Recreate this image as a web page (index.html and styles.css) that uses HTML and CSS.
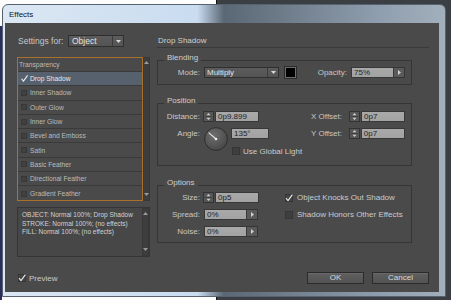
FILE: index.html
```html
<!DOCTYPE html>
<html>
<head>
<meta charset="utf-8">
<title>Effects</title>
<link rel="stylesheet" href="styles.css">
</head>
<body>
<div class="window">
  <div class="titlebar">Effects</div>
  <div class="client">
    <div class="main">
      <div class="left">
        <div class="settings">
          <span class="settings-lbl">Settings for:</span>
          <div class="select select-object"><span class="select-text">Object</span><span class="select-btn"><svg width="5" height="3" viewBox="0 0 5 3"><path d="M0 0H5L2.5 3Z" fill="#d8d8d8"/></svg></span></div>
        </div>
        <div class="listwrap">
          <ul class="list">
            <li class="list-head">Transparency</li>
            <li class="list-item is-selected"><span class="lchk"><svg width="7" height="7" viewBox="0 0 7 7"><path d="M0.6 3.8L2.5 6L6.6 0.4" fill="none" stroke="#f0f0f0" stroke-width="1.1"/></svg></span>Drop Shadow</li>
            <li class="list-item"><span class="lbox"></span>Inner Shadow</li>
            <li class="list-item"><span class="lbox"></span>Outer Glow</li>
            <li class="list-item"><span class="lbox"></span>Inner Glow</li>
            <li class="list-item"><span class="lbox"></span>Bevel and Emboss</li>
            <li class="list-item"><span class="lbox"></span>Satin</li>
            <li class="list-item"><span class="lbox"></span>Basic Feather</li>
            <li class="list-item"><span class="lbox"></span>Directional Feather</li>
            <li class="list-item"><span class="lbox"></span>Gradient Feather</li>
          </ul>
          <div class="scroll">
            <svg width="5" height="3" viewBox="0 0 5 3"><path d="M0 3H5L2.5 0Z" fill="#9a9a9a"/></svg>
            <svg width="5" height="3" viewBox="0 0 5 3"><path d="M0 0H5L2.5 3Z" fill="#9a9a9a"/></svg>
          </div>
        </div>
        <div class="summary">
          <div class="sumtext">OBJECT: Normal 100%; Drop Shadow<br>STROKE: Normal 100%; (no effects)<br>FILL: Normal 100%; (no effects)</div>
          <div class="scroll">
            <svg width="5" height="3" viewBox="0 0 5 3"><path d="M0 3H5L2.5 0Z" fill="#9a9a9a"/></svg>
            <svg width="5" height="3" viewBox="0 0 5 3"><path d="M0 0H5L2.5 3Z" fill="#9a9a9a"/></svg>
          </div>
        </div>
      </div>

      <div class="right">
        <div class="header">Drop Shadow</div>

        <div class="group group-blending">
          <div class="gtitle">Blending</div>
          <div class="blend-row">
            <span class="flabel">Mode:</span>
            <div class="select select-mode"><span class="select-text">Multiply</span><span class="select-btn"><svg width="5" height="3" viewBox="0 0 5 3"><path d="M0 0H5L2.5 3Z" fill="#d8d8d8"/></svg></span></div>
            <span class="swatch"></span>
            <span class="olabel">Opacity:</span>
            <div class="field field-opacity"><span class="input input-opacity">75%</span><span class="arrowbtn"><svg width="3" height="5" viewBox="0 0 3 5"><path d="M0 0V5L3 2.5Z" fill="#d0d0d0"/></svg></span></div>
          </div>
        </div>

        <div class="group group-position">
          <div class="gtitle">Position</div>
          <div class="pos-body">
            <div class="pos-left">
              <div class="row">
                <span class="flabel">Distance:</span>
                <span class="spinner"><svg width="11" height="11" viewBox="0 0 11 11"><path d="M3.5 4.2L5.5 2L7.5 4.2Z" fill="#d0d0d0"/><path d="M2 5.5H9" stroke="#3a3a3a" stroke-width="0.8"/><path d="M3.5 6.8L5.5 9L7.5 6.8Z" fill="#d0d0d0"/></svg></span>
                <span class="input input-44">0p9.899</span>
              </div>
              <div class="angle">
                <span class="flabel angle-lbl">Angle:</span>
                <span class="dial"><svg width="24" height="24" viewBox="0 0 24 24"><defs><radialGradient id="dg" cx="0.4" cy="0.35" r="0.7"><stop offset="0" stop-color="#6e6e6e"/><stop offset="1" stop-color="#474747"/></radialGradient></defs><circle cx="12" cy="12" r="11.4" fill="url(#dg)" stroke="#2e2e2e" stroke-width="1"/><path d="M12 12L4.6 5.6" stroke="#e6e6e6" stroke-width="1.1"/><circle cx="12" cy="12" r="1.3" fill="#f0f0f0"/></svg></span>
                <div class="angle-col">
                  <span class="input input-angle">135°</span>
                  <label class="cbrow cbrow-light"><span class="cbox"></span><span class="cbtext">Use Global Light</span></label>
                </div>
              </div>
            </div>
            <div class="pos-right">
              <div class="row">
                <span class="rlabel">X Offset:</span>
                <span class="spinner"><svg width="11" height="11" viewBox="0 0 11 11"><path d="M3.5 4.2L5.5 2L7.5 4.2Z" fill="#d0d0d0"/><path d="M2 5.5H9" stroke="#3a3a3a" stroke-width="0.8"/><path d="M3.5 6.8L5.5 9L7.5 6.8Z" fill="#d0d0d0"/></svg></span>
                <span class="input input-44">0p7</span>
              </div>
              <div class="row row-gap">
                <span class="rlabel">Y Offset:</span>
                <span class="spinner"><svg width="11" height="11" viewBox="0 0 11 11"><path d="M3.5 4.2L5.5 2L7.5 4.2Z" fill="#d0d0d0"/><path d="M2 5.5H9" stroke="#3a3a3a" stroke-width="0.8"/><path d="M3.5 6.8L5.5 9L7.5 6.8Z" fill="#d0d0d0"/></svg></span>
                <span class="input input-44">0p7</span>
              </div>
            </div>
          </div>
        </div>

        <div class="group group-options">
          <div class="gtitle">Options</div>
          <div class="opt-body">
            <div class="opt-left">
              <div class="row">
                <span class="flabel">Size:</span>
                <span class="spinner"><svg width="11" height="11" viewBox="0 0 11 11"><path d="M3.5 4.2L5.5 2L7.5 4.2Z" fill="#d0d0d0"/><path d="M2 5.5H9" stroke="#3a3a3a" stroke-width="0.8"/><path d="M3.5 6.8L5.5 9L7.5 6.8Z" fill="#d0d0d0"/></svg></span>
                <span class="input input-44">0p5</span>
              </div>
              <div class="row row-gap">
                <span class="flabel">Spread:</span>
                <div class="field field-small"><span class="input input-43">0%</span><span class="arrowbtn"><svg width="3" height="5" viewBox="0 0 3 5"><path d="M0 0V5L3 2.5Z" fill="#d0d0d0"/></svg></span></div>
              </div>
              <div class="row row-gap">
                <span class="flabel">Noise:</span>
                <div class="field field-small"><span class="input input-43">0%</span><span class="arrowbtn"><svg width="3" height="5" viewBox="0 0 3 5"><path d="M0 0V5L3 2.5Z" fill="#d0d0d0"/></svg></span></div>
              </div>
            </div>
            <div class="opt-right">
              <label class="row cbrow"><span class="cbox cbox-on"><svg width="8" height="8" viewBox="0 0 8 8"><path d="M1 4.2L3 6.6L7.4 0.6" fill="none" stroke="#ececec" stroke-width="1.1"/></svg></span><span class="cbtext">Object Knocks Out Shadow</span></label>
              <label class="row row-gap cbrow"><span class="cbox"></span><span class="cbtext">Shadow Honors Other Effects</span></label>
            </div>
          </div>
        </div>
      </div>
    </div>

    <div class="footer">
      <label class="preview"><span class="cbox cbox-on"><svg width="8" height="8" viewBox="0 0 8 8"><path d="M1 4.2L3 6.6L7.4 0.6" fill="none" stroke="#ececec" stroke-width="1.1"/></svg></span><span class="preview-text">Preview</span></label>
      <div class="buttons">
        <span class="btn">OK</span>
        <span class="btn btn-cancel">Cancel</span>
      </div>
    </div>
  </div>
</div>
</body>
</html>
```

FILE: styles.css
```css
* { box-sizing: border-box; margin: 0; padding: 0; }

html, body { width: 451px; height: 300px; overflow: hidden; }

body {
  font-family: "Liberation Sans", Arial, sans-serif;
  font-size: 8px;
  color: #cdcdcd;
  background:
    linear-gradient(to bottom, transparent 0 26px, #2d2c5e 26px) left top / 2px 100% no-repeat,
    linear-gradient(to right, #fdfdfd 0 216px, #121212 216px 217px, #3b3f44 217px);
}

.window {
  margin: 4px 0 0 2px;
  width: 444px;
  height: 293px;
  border: 1px solid #56626e;
  border-radius: 6px 6px 0 0;
  padding: 0 6px 4px 2px;
  background: linear-gradient(to right, #dbe7f3 0, #c9dcf0 44%, #5a6774 50%, #6c7a88 62%, #8f9eae 85%, #a2afbc 100%);
  display: flex;
  flex-direction: column;
}

.titlebar {
  height: 18px;
  line-height: 20px;
  padding-left: 4px;
  color: #151515;
  font-size: 8px;
}

.client {
  flex: 1;
  background: #4a4a4a;
  padding: 12px 10px 0 12px;
  display: flex;
  flex-direction: column;
}

.main { display: flex; gap: 7px; }

.left { width: 133px; }
.right { width: 272px; }

/* settings row */
.settings { display: flex; align-items: center; height: 12px; }
.settings-lbl { width: 51px; padding-left: 1px; font-size: 8.5px; color: #c8c8c8; }

.select {
  display: flex;
  height: 12px;
  background: linear-gradient(#5c5c5c, #545454);
  border: 1px solid #2f2f2f;
  color: #e2e2e2;
}
.select-text { flex: 1; padding-left: 3px; line-height: 10px; }
.select-btn {
  width: 11px;
  border-left: 1px solid #3a3a3a;
  display: flex;
  align-items: center;
  justify-content: center;
}
.select-object { width: 56px; font-size: 8.5px; }
.select-mode { width: 75px; height: 11px; margin-left: 4px; }
.select-mode .select-text { line-height: 9px; padding-left: 2px; }

/* effects list */
.listwrap { margin-top: 10px; height: 144px; display: flex; }
.list {
  list-style: none;
  width: 126px;
  border: 1px solid #a8722c;
  font-size: 6.7px;
  color: #bcbcbc;
}
.list-head {
  height: 14px;
  line-height: 13px;
  padding-left: 1px;
  border-bottom: 1px solid #3a3a3a;
}
.list-item {
  height: 14.3px;
  border-bottom: 1px solid #3a3a3a;
  display: flex;
  align-items: center;
  padding-left: 3px;
}
.list-item:last-child { border-bottom: none; }
.list-item.is-selected { background: #57616e; color: #e8e8e8; }
.lbox {
  width: 6px; height: 6px;
  margin-right: 3px;
  background: #404040;
  border: 1px solid #383838;
}
.lchk { width: 7px; height: 7px; margin-right: 2px; display: flex; }

.scroll {
  width: 7px;
  background: #3d3d3d;
  border: 1px solid #383838;
  display: flex;
  flex-direction: column;
  align-items: center;
  justify-content: space-between;
  padding: 3px 0 4px;
}

.summary {
  margin-top: 6px;
  height: 50px;
  display: flex;
  border: 1px solid #353535;
  background: #474747;
}
.sumtext {
  flex: 1;
  padding: 3px 0 0 4px;
  font-size: 6.5px;
  line-height: 8.5px;
  color: #d2d2d2;
}

/* right side */
.header {
  height: 13px;
  line-height: 12px;
  padding-left: 1px;
  border-bottom: 1px solid #3a3a3a;
  color: #cfcfcf;
}

.group {
  width: 255px;
  border: 1px solid #353535;
  padding: 0 6px 0 0;
}
.gtitle {
  width: fit-content;
  height: 10px;
  line-height: 10px;
  margin: -8px 0 0 6px;
  padding: 0 3px;
  background: #4a4a4a;
  color: #cfcfcf;
}
.group-blending { margin-top: 12px; }
.group-position { margin-top: 18px; }
.group-options { margin-top: 19px; }

.flabel { width: 42px; text-align: right; color: #c8c8c8; }
.rlabel { margin-right: 4px; color: #c8c8c8; }
.olabel { margin-left: auto; margin-right: 4px; color: #c8c8c8; }

.blend-row {
  display: flex;
  align-items: center;
  height: 13px;
  margin: 3px 0 5px;
}

.swatch {
  width: 13px; height: 13px;
  margin-left: 5px;
  background: #000;
  border: 1px solid #2a2a2a;
  box-shadow: inset 0 0 0 1px #6c6c6c;
}

.row { display: flex; align-items: center; height: 11px; }
.row-gap { margin-top: 6px; }

.input {
  height: 11px;
  background: linear-gradient(#a9a9a9, #a2a2a2);
  border: 1px solid #383838;
  color: #1f1f1f;
  line-height: 9px;
  padding-left: 2px;
}
.input-44 { width: 44px; margin-left: 1px; }
.input-43 { width: 43px; }
.input-angle { display: block; width: 38px; margin-top: 1px; }
.input-opacity { width: 43px; }

.field { display: flex; }
.field-small { margin-left: 4px; }
.arrowbtn {
  width: 11px; height: 11px;
  background: #5a5a5a;
  border: 1px solid #353535;
  border-left: none;
  display: flex;
  align-items: center;
  justify-content: center;
}

.spinner {
  width: 11px; height: 11px;
  margin-left: 3px;
  background: #575757;
  border: 1px solid #333;
  display: flex;
}
.spinner svg { margin: -1px; }

.pos-body { display: flex; margin: 5px 0 10px; }
.pos-right { margin-left: auto; }

.angle { display: flex; margin-top: 5px; }
.angle-lbl { padding-top: 2px; line-height: 10px; }
.dial { width: 24px; height: 24px; margin-left: 4px; display: flex; }
.angle-col { margin-left: 3px; }

.cbrow { display: flex; align-items: center; color: #cbcbcb; }
.cbrow-light { margin-top: 8px; height: 8px; margin-left: 1px; }
.cbox {
  width: 8px; height: 8px;
  background: #3f3f3f;
  border: 1px solid #353535;
  display: flex;
  flex: none;
}
.cbox-on { background: #444; }
.cbox svg { margin: -1px; }
.cbtext { margin-left: 3px; }
.opt-right .cbtext { margin-left: 4px; }

.opt-body { display: flex; margin: 4px 0 5px; }
.opt-left { width: 127px; }

/* footer */
.footer {
  margin-top: 15px;
  height: 12px;
  display: flex;
  align-items: center;
}
.preview { display: flex; align-items: center; margin-left: 1px; }
.preview-text { margin-left: 3px; color: #cbcbcb; }
.buttons { margin-left: auto; display: flex; }
.btn {
  width: 57px; height: 12px;
  line-height: 10px;
  text-align: center;
  background: linear-gradient(#5f5f5f, #535353);
  border: 1px solid #2b2b2b;
  box-shadow: inset 0 1px 0 #696969;
  color: #d8d8d8;
}
.btn-cancel { margin-left: 8px; }
```
